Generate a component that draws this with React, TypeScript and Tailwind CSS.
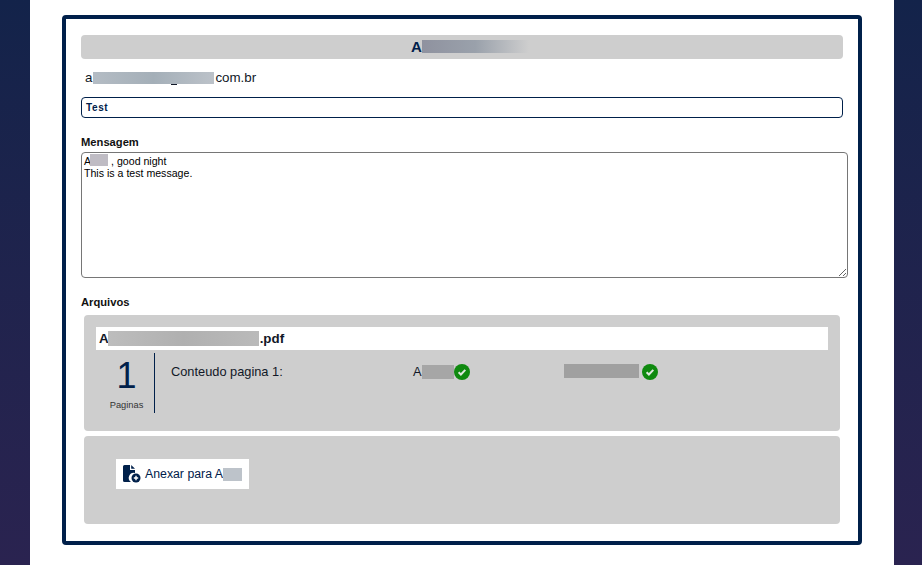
const font = "font-['Liberation_Sans',Arial,sans-serif]"

function Check() {
  return (
    <svg viewBox="0 0 16 16" className="w-4 h-4 shrink-0">
      <circle cx="8" cy="8" r="8" fill="#0f8a0f" />
      <path d="M4.6 8.3l2.3 2.2 4.4-4.6" fill="none" stroke="#dfe8df" strokeWidth="2" />
    </svg>
  )
}

function AttachIcon() {
  return (
    <svg viewBox="0 0 18 18" className="w-[18px] h-[18px] shrink-0">
      <path d="M0 1.5A1.5 1.5 0 0 1 1.5 0H7v5h5v3a5 5 0 0 0-4 9H1.5A1.5 1.5 0 0 1 0 15.500z" fill="#00204a" />
      <path d="M8.200 0l3.800 3.800H8.200z" fill="#00204a" />
      <circle cx="13" cy="13" r="4.500" fill="#00204a" />
      <path d="M13 10.800v4.400M10.800 13h4.400" stroke="#fff" strokeWidth="1.400" />
    </svg>
  )
}

export default function App() {
  return (
    <div className={`h-[565px] overflow-hidden bg-gradient-to-b from-[#13234a] to-[#2a2350] px-[30px] ${font}`}>
      <div className="h-full w-[864px] bg-white px-[32px] pt-[15px]">
        <div className="h-[530px] rounded-[4px] border-4 border-[#00204a] px-[15px] pt-[16px]">
          {/* header */}
          <div className="h-[24px] rounded-[4px] bg-[#cecece] flex items-center justify-center pl-[16px] pb-[1px]">
            <span className="text-[15px] font-bold text-[#00204a] leading-none">A</span>
            <div className="h-[13px] w-[107px] bg-gradient-to-r from-[#8f929f] via-[#9aa1ab] to-[#cecece]" />
          </div>

          <div className="mt-[11px] h-[16px] pl-[4px] flex items-center text-[13.33px] text-[#111827]">
            <span>a</span>
            <div className="relative h-[12px] w-[121px] bg-gradient-to-r from-[#b4bcc4] via-[#a4afb8] to-[#bcc2c9] ml-[1px] mr-[1px]">
              <div className="absolute left-[78px] top-[12px] h-[1px] w-[6px] bg-[#111827]" />
            </div>
            <span>com.br</span>
          </div>

          <div className="mt-[11px] h-[21px] rounded-[4px] border border-[#00204a] flex items-center pl-[4px] text-[10px] font-bold tracking-[0.6px] text-[#00204a]">
            Test
          </div>

          <div className="mt-[17px] h-[14px] text-[11.200px] font-bold leading-[14px] text-[#111111]">Mensagem</div>

          <div className="relative mt-[3px] w-[767px]">
            <textarea
              readOnly
              value={"A       , good night\nThis is a test message."}
              className="block h-[126px] w-full rounded-[4px] border border-[#767676] bg-white p-[2px] text-[10.600px] leading-[12px] text-black outline-none"
            />
            <div className="absolute left-[9px] top-[2px] h-[12px] w-[18px] bg-[#bfbcc4]" />
          </div>

          <div className="mt-[17px] h-[14px] text-[11.200px] font-bold leading-[14px] text-[#111111]">Arquivos</div>

          {/* files */}
          <div className="mt-[6px] ml-[3px] w-[756px] h-[116px] rounded-[4px] bg-[#cecece] px-[12px] pt-[12px]">
            <div className="h-[23px] bg-white flex items-center pl-[3px] text-[13.33px] font-bold text-[#111827]">
              <span>A</span>
              <div className="h-[15px] w-[151px] -ml-[1px] mr-[1px] bg-gradient-to-r from-[#bdbdbd] via-[#b0b0b0] to-[#bababa]" />
              <span>.pdf</span>
            </div>
            <div className="mt-[3px] flex">
              <div className="w-[59px] h-[60px] border-r border-[#00204a] flex flex-col items-center pl-[3px]">
                <span className="text-[36px] leading-[46px] text-[#00204a]">1</span>
                <span className="text-[9.300px] leading-[12px] text-[#333333]">Paginas</span>
              </div>
              <div className="flex pl-[16px] pt-[12px] text-[12.800px] leading-[14px] text-[#111827]">
                <span className="w-[242px]">Conteudo pagina 1:</span>
                <span className="w-[151px] flex items-start">
                  A
                  <div className="h-[14px] w-[32px] bg-[#a6a6a6]" />
                  <div className="-mt-[1px]">
                    <Check />
                  </div>
                </span>
                <span className="flex items-start">
                  <div className="-mt-[1px] h-[14px] w-[75px] bg-[#a0a0a0] mr-[3px]" />
                  <div className="-mt-[1px]">
                    <Check />
                  </div>
                </span>
              </div>
            </div>
          </div>

          <div className="mt-[5px] ml-[3px] w-[756px] h-[88px] rounded-[4px] bg-[#cecece] pl-[32px] pt-[23px]">
            <div className="w-[133px] h-[30px] bg-white flex items-center pl-[7px] text-[12.300px] text-[#00204a]">
              <AttachIcon />
              <span className="ml-[4px]">Anexar para A</span>
              <div className="h-[13px] w-[19px] bg-[#bdc3ca]" />
            </div>
          </div>
        </div>
      </div>
    </div>
  )
}
